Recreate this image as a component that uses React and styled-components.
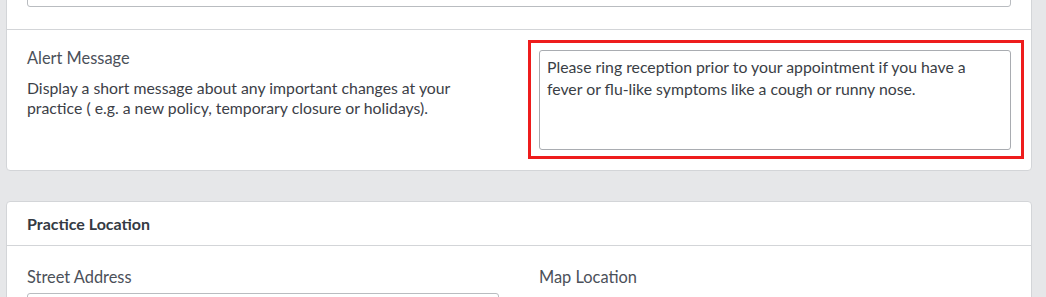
import React from "react";
import styled, { createGlobalStyle } from "styled-components";

const Global = createGlobalStyle`
  html, body { margin: 0; padding: 0; }
  body {
    background: #e6e7e9;
    font-family: Lato, "Noto Sans", sans-serif;
    overflow: hidden;
  }
`;

const Page = styled.div`
  padding: 0 14px 0 6px;
  margin-top: -50px;
  display: flex;
  flex-direction: column;
  gap: 30px;
`;

const Card = styled.section`
  background: #fff;
  border: 1px solid #d3d5d8;
  border-radius: 4px;
`;

const CardHeader = styled.div`
  height: 43px;
  padding: 0 20px;
  display: flex;
  align-items: center;
  border-bottom: 1px solid #d3d5d8;
  font-size: 16px;
  font-weight: 700;
  color: #343a43;
`;

const Row = styled.div`
  display: grid;
  grid-template-columns: ${(p) => (p.$single ? "1fr" : "1fr 1fr")};
  column-gap: 40px;
  padding: ${(p) => p.$pad || "20px"};
  border-bottom: ${(p) => (p.$divider ? "1px solid #d3d5d8" : "none")};
`;

const Field = styled.div`
  display: flex;
  flex-direction: column;
`;

const Label = styled.div`
  font-size: 16.4px;
  line-height: 20px;
  color: #4b5059;
  margin-top: ${(p) => p.$mt || "0"};
  margin-bottom: ${(p) => p.$mb || "0"};
`;

const Help = styled.p`
  margin: 0;
  font-size: 15.8px;
  line-height: 20px;
  color: #3c4047;
  max-width: 445px;
`;

const Input = styled.div`
  height: ${(p) => p.$h || "36px"};
  box-sizing: border-box;
  border: 1px solid #b9bcc0;
  border-radius: 3px;
  background: #fff;
`;

const Highlight = styled.div`
  position: relative;
  &::after {
    content: "";
    position: absolute;
    top: -10px;
    left: -11px;
    right: -13px;
    bottom: -9px;
    border: 3px solid #ee1c1c;
    pointer-events: none;
  }
`;

const TextArea = styled.textarea`
  display: block;
  width: 100%;
  height: 100px;
  box-sizing: border-box;
  margin: 0;
  padding: 5px 7px;
  resize: none;
  border: 1px solid #a9acb1;
  border-radius: 3px;
  font-family: Lato, "Noto Sans", sans-serif;
  font-size: 15.8px;
  line-height: 22px;
  color: #3a3e45;
  background: #fff;
  outline: none;
`;

export default function App() {
  return (
    <>
      <Global />
      <Page>
        <Card>
          <Row $single $divider $pad="20px 20px 22px">
            <Input $h="36px" />
          </Row>
          <Row>
            <Field>
              <Label $mt="-2px" $mb="10px">Alert Message</Label>
              <Help>
                Display a short message about any important changes at your
                practice ( e.g. a new policy, temporary closure or holidays).
              </Help>
            </Field>
            <Highlight>
              <TextArea
                readOnly
                defaultValue="Please ring reception prior to your appointment if you have a fever or flu-like symptoms like a cough or runny nose."
              />
            </Highlight>
          </Row>
        </Card>
        <Card>
          <CardHeader>Practice Location</CardHeader>
          <Row>
            <Field>
              <Label $mt="1px" $mb="6px">Street Address</Label>
              <Input $h="36px" />
            </Field>
            <Field>
              <Label $mt="1px">Map Location</Label>
            </Field>
          </Row>
        </Card>
      </Page>
    </>
  );
}
